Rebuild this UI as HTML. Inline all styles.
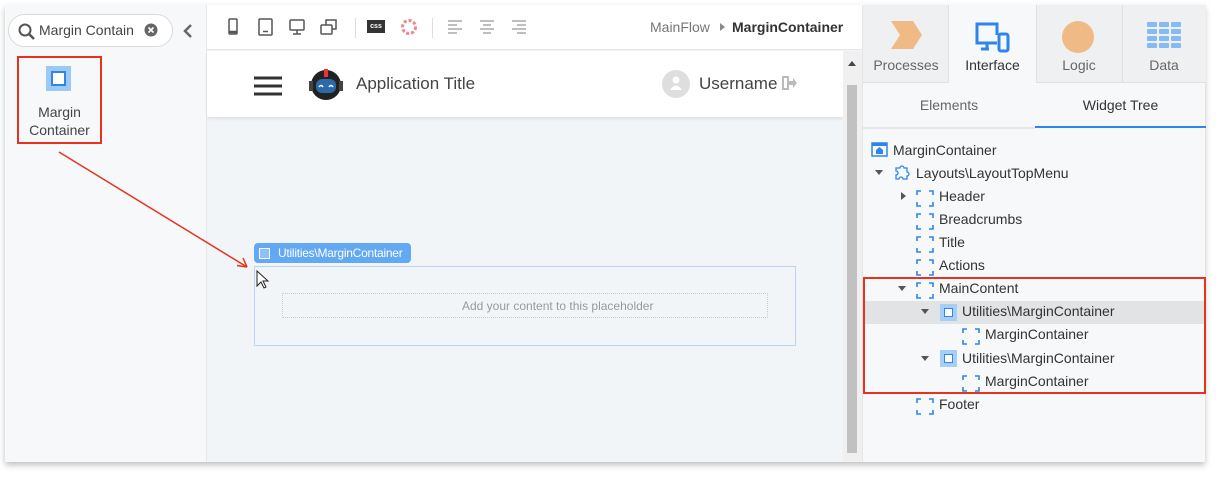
<!DOCTYPE html>
<html><head><meta charset="utf-8"><style>
*{box-sizing:border-box;margin:0;padding:0}
body{width:1220px;height:477px;background:#fff;font-family:"Liberation Sans",sans-serif;position:relative;overflow:hidden;color:#333}
.abs{position:absolute}
#frame{left:5px;top:5px;width:1200px;height:457px;box-shadow:0 3px 6px rgba(0,0,0,.25);background:#f3f5f8}
#left{left:0;top:0;width:202px;height:457px;background:#f7f8fa;border-right:1px solid #e6e8ea}
#tool{left:202px;top:0;width:655px;height:45px;background:#fff;border-bottom:1px solid #e3e5e8}
#canvas{left:202px;top:46px;width:636px;height:411px;background:#f2f5f8}
#scroll{left:838px;top:46px;width:19px;height:411px;background:#f0f0f0}
#right{left:857px;top:0;width:343px;height:457px;background:#f7f8fa;border-left:1px solid #e3e5e8}
.tr{position:absolute;font-size:14px;color:#333;white-space:nowrap}
</style></head><body>
<div id="frame" class="abs">
 <div id="left" class="abs">
  <div class="abs" style="left:3px;top:9px;width:165px;height:33px;border:1px solid #d8dadd;border-radius:17px;background:#fff"></div>
  <svg class="abs" style="left:13px;top:18px" width="18" height="18"><circle cx="7" cy="7" r="5.5" fill="none" stroke="#555" stroke-width="2"/><path d="M11 11l5 5" stroke="#555" stroke-width="2.5"/></svg>
  <div class="abs" style="left:34px;top:17px;font-size:14px;color:#444">Margin Contain</div>
  <svg class="abs" style="left:139px;top:18px" width="14" height="14"><circle cx="7" cy="7" r="6.5" fill="#666"/><path d="M4.5 4.5l5 5M9.5 4.5l-5 5" stroke="#fff" stroke-width="1.6"/></svg>
  <svg class="abs" style="left:178px;top:19px" width="10" height="14"><path d="M8 1L2 7l6 6" fill="none" stroke="#666" stroke-width="2.5"/></svg>
  <div class="abs" style="left:12px;top:51px;width:85px;height:88px;border:2px solid #e8321e"></div>
  <div class="abs" style="left:41px;top:61px;width:25px;height:25px;background:#9ccaf7"></div>
  <div class="abs" style="left:46px;top:66px;width:15px;height:15px;border:2px solid #2f86ea;background:#fff"></div>
  <div class="abs" style="left:12px;top:98px;width:85px;text-align:center;font-size:14px;line-height:18px;color:#444">Margin<br>Container</div>
 </div>
 <div id="tool" class="abs">
  <svg class="abs" style="left:20px;top:12px" width="120" height="20" fill="none" stroke="#555" stroke-width="1.5">
   <rect x="2" y="2" width="8" height="15" rx="1"/><path d="M2.5 15h7" stroke-width="2.5"/>
   <rect x="32" y="2" width="13" height="16" rx="1"/><path d="M36 14.5h5"/>
   <rect x="63" y="3" width="14" height="10" rx="1"/><path d="M70 13v4M66 17h8"/>
   <rect x="94" y="8" width="11" height="9" rx="1"/><path d="M99 8V3h10v9h-4"/>
  </svg>
  <div class="abs" style="left:148px;top:13px;width:1px;height:20px;background:#ddd"></div>
  <div class="abs" style="left:160px;top:15px;width:18px;height:13px;background:#333;color:#fff;font-size:7px;font-weight:bold;text-align:center;line-height:13px">css</div>
  <svg class="abs" style="left:193px;top:13px" width="18" height="18"><circle cx="9" cy="9" r="6.5" fill="none" stroke="#e88" stroke-width="3" stroke-dasharray="3 2"/></svg>
  <div class="abs" style="left:225px;top:13px;width:1px;height:20px;background:#ddd"></div>
  <svg class="abs" style="left:240px;top:14px" width="90" height="16" stroke="#999" stroke-width="1.2">
   <path d="M1 2h14M1 6h9M1 10h14M1 14h9"/><path d="M33 2h14M36 6h8M33 10h14M36 14h8"/><path d="M65 2h14M70 6h9M65 10h14M70 14h9"/>
  </svg>
  <div class="abs" style="left:443px;top:14px;font-size:14px;color:#777">MainFlow</div>
  <div class="abs" style="left:513px;top:18px;width:0;height:0;border-left:5px solid #888;border-top:4px solid transparent;border-bottom:4px solid transparent"></div>
  <div class="abs" style="left:525px;top:14px;font-size:14px;font-weight:bold;color:#333">MarginContainer</div>
 </div>
 <div id="canvas" class="abs">
  <div class="abs" style="left:0;top:0;width:636px;height:66px;background:#fff;box-shadow:0 2px 3px rgba(0,0,0,.08)"></div>
  <svg class="abs" style="left:46px;top:25px" width="30" height="20"><path d="M1 2h28M1 10h28M1 18h28" stroke="#333" stroke-width="3"/></svg>
  <svg class="abs" style="left:100px;top:14px" width="38" height="38"><circle cx="19" cy="20" r="15" fill="#222"/><rect x="17" y="4" width="4" height="8" fill="#e33"/><rect x="9" y="14" width="20" height="14" rx="6" fill="#2a6aa8"/><path d="M12 22q2-3 4 0M22 22q2-3 4 0" stroke="#fff" stroke-width="1.5" fill="none"/><rect x="2" y="16" width="4" height="10" fill="#444"/><rect x="32" y="16" width="4" height="10" fill="#444"/></svg>
  <div class="abs" style="left:149px;top:23px;font-size:17px;color:#444">Application Title</div>
  <div class="abs" style="left:455px;top:19px;width:28px;height:28px;border-radius:50%;background:#dedede"></div>
  <svg class="abs" style="left:462px;top:24px" width="14" height="16"><circle cx="7" cy="5" r="3.5" fill="#fff"/><path d="M1 15q6-9 12 0z" fill="#fff"/></svg>
  <div class="abs" style="left:492px;top:23px;font-size:17px;color:#444">Username</div>
  <svg class="abs" style="left:575px;top:25px" width="16" height="14"><path d="M1 1h5v12H1z" fill="none" stroke="#bbb" stroke-width="2"/><path d="M7 5h4V2l4 5-4 5V9H7z" fill="#bbb"/></svg>
  <div class="abs" style="left:47px;top:192px;width:157px;height:20px;background:#62a8f3;border-radius:4px;color:#fff;font-size:12px;line-height:20px;padding-left:24px;letter-spacing:-.25px">Utilities\MarginContainer</div>
  <div class="abs" style="left:52px;top:197px;width:11px;height:11px;border:1.5px solid #fff;background:#8cc0f7"></div>
  <div class="abs" style="left:47px;top:215px;width:542px;height:80px;border:1px solid #b9d5f3"></div>
  <div class="abs" style="left:75px;top:242px;width:486px;height:25px;border:1px dotted #ccc;padding-left:179px;font-size:12px;line-height:24px;color:#999">Add your content to this placeholder</div>
  <svg class="abs" style="left:49px;top:219px" width="14" height="20"><path d="M1 1v15l4-4 3 6 2-1-3-6h5z" fill="#fff" stroke="#222"/></svg>
 </div>
 <div id="scroll" class="abs">
  <div class="abs" style="left:5px;top:10px;width:0;height:0;border-bottom:5px solid #444;border-left:4px solid transparent;border-right:4px solid transparent"></div>
  <div class="abs" style="left:4px;top:34px;width:10px;height:368px;background:#c1c1c1"></div>
 </div>
 <div id="right" class="abs">
  <div class="abs" style="left:0;top:0;width:86px;height:78px;background:#eff0f2;border-right:1px solid #e0e0e0;border-bottom:1px solid #e0e0e0"></div>
  <div class="abs" style="left:173px;top:0;width:86px;height:78px;background:#eff0f2;border-left:1px solid #e0e0e0;border-bottom:1px solid #e0e0e0"></div>
  <div class="abs" style="left:259px;top:0;width:84px;height:78px;background:#eff0f2;border-left:1px solid #e0e0e0;border-bottom:1px solid #e0e0e0"></div>
  <svg class="abs" style="left:27px;top:15px" width="34" height="30"><path d="M1 1h22l9 14-9 14H1l9-14z" fill="#efba86"/></svg>
  <svg class="abs" style="left:111px;top:16px" width="36" height="32" fill="none" stroke="#2e86ea" stroke-width="3"><path d="M23 14V3H3v19h20"/><path d="M13 22v5M7 28h8"/><rect x="25" y="13" width="9" height="17" rx="2"/></svg>
  <div class="abs" style="left:199px;top:16px;width:32px;height:32px;border-radius:50%;background:#efba86"></div>
  <svg class="abs" style="left:284px;top:17px" width="35" height="27" fill="#86baf3"><rect x="0" y="0" width="10" height="5" rx="1"/><rect x="12" y="0" width="10" height="5" rx="1"/><rect x="24" y="0" width="10" height="5" rx="1"/><rect x="0" y="7" width="10" height="5" rx="1"/><rect x="12" y="7" width="10" height="5" rx="1"/><rect x="24" y="7" width="10" height="5" rx="1"/><rect x="0" y="14" width="10" height="5" rx="1"/><rect x="12" y="14" width="10" height="5" rx="1"/><rect x="24" y="14" width="10" height="5" rx="1"/><rect x="0" y="21" width="10" height="5" rx="1"/><rect x="12" y="21" width="10" height="5" rx="1"/><rect x="24" y="21" width="10" height="5" rx="1"/></svg>
  <div class="abs" style="left:0;top:52px;width:86px;text-align:center;font-size:14px;color:#666">Processes</div>
  <div class="abs" style="left:86px;top:52px;width:87px;text-align:center;font-size:14px;color:#333">Interface</div>
  <div class="abs" style="left:173px;top:52px;width:86px;text-align:center;font-size:14px;color:#666">Logic</div>
  <div class="abs" style="left:259px;top:52px;width:84px;text-align:center;font-size:14px;color:#666">Data</div>
  <div class="abs" style="left:0;top:92px;width:172px;text-align:center;font-size:14px;color:#666">Elements</div>
  <div class="abs" style="left:172px;top:92px;width:171px;text-align:center;font-size:14px;color:#333">Widget Tree</div>
  <div class="abs" style="left:0;top:122px;width:172px;height:2px;background:#e3e5e8"></div>
  <div class="abs" style="left:172px;top:121px;width:171px;height:2px;background:#2e86ea"></div>
  <svg class="abs" style="left:8px;top:137px" width="17" height="15"><rect x="1" y="1" width="15" height="13" fill="none" stroke="#2e86ea" stroke-width="1.5"/><rect x="1" y="1" width="15" height="3" fill="#2e86ea"/><path d="M5 12V8l3.5-3L12 8v4z" fill="#2e86ea"/></svg>
  <div class="tr" style="left:30px;top:137px">MarginContainer</div>
  <div class="abs" style="left:12px;top:165px;border-top:5px solid #555;border-left:4px solid transparent;border-right:4px solid transparent"></div>
  <svg class="abs" style="left:30px;top:160px" width="17" height="16"><path d="M3 3h4a2 2 0 014 0h3v4a2 2 0 010 4v3h-4a2 2 0 00-4 0H3v-4a2 2 0 000-4z" fill="none" stroke="#2e86ea" stroke-width="1.3"/></svg>
  <div class="tr" style="left:53px;top:160px">Layouts\LayoutTopMenu</div>
  <div class="abs" style="left:38px;top:187px;border-left:5px solid #555;border-top:4px solid transparent;border-bottom:4px solid transparent"></div>
  <div class="abs" style="left:0;top:296px;width:343px;height:23px;background:#e2e3e5"></div>
  <div class="abs" style="left:0;top:272px;width:343px;height:117px;border:2px solid #e8321e"></div>
  <div class="abs" style="left:35px;top:281px;border-top:5px solid #555;border-left:4px solid transparent;border-right:4px solid transparent"></div>
  <div class="abs" style="left:58px;top:304px;border-top:5px solid #555;border-left:4px solid transparent;border-right:4px solid transparent"></div>
  <div class="abs" style="left:58px;top:351px;border-top:5px solid #555;border-left:4px solid transparent;border-right:4px solid transparent"></div>
  <div class="abs" style="left:77px;top:299px;width:17px;height:17px;background:#a6cff8"></div><div class="abs" style="left:81px;top:303px;width:9px;height:9px;border:1.5px solid #2e86ea;background:#fff"></div>
  <div class="abs" style="left:77px;top:345px;width:17px;height:17px;background:#a6cff8"></div><div class="abs" style="left:81px;top:349px;width:9px;height:9px;border:1.5px solid #2e86ea;background:#fff"></div>
  <div class="tr" style="left:76px;top:183px">Header</div>
  <div class="tr" style="left:76px;top:206px">Breadcrumbs</div>
  <div class="tr" style="left:76px;top:229px">Title</div>
  <div class="tr" style="left:76px;top:252px">Actions</div>
  <div class="tr" style="left:76px;top:275px">MainContent</div>
  <div class="tr" style="left:99px;top:298px">Utilities\MarginContainer</div>
  <div class="tr" style="left:122px;top:321px">MarginContainer</div>
  <div class="tr" style="left:99px;top:345px">Utilities\MarginContainer</div>
  <div class="tr" style="left:122px;top:368px">MarginContainer</div>
  <div class="tr" style="left:76px;top:391px">Footer</div>
  <svg class="abs" style="left:0;top:0" width="343" height="457" fill="none" stroke="#2e86ea" stroke-width="1.6">
   <g id="b"><path d="M54 190v-4h4M66 186h4v4M54 197v4h4M66 201h4v-4"/></g>
   <use href="#b" y="23"/><use href="#b" y="46"/><use href="#b" y="69"/><use href="#b" y="92"/>
   <use href="#b" x="46" y="138"/><use href="#b" x="46" y="185"/><use href="#b" y="208"/>
  </svg>
 </div>
</div>
<svg class="abs" style="left:0;top:0" width="1220" height="477"><path d="M59 152L247 267" stroke="#e8321e" stroke-width="1.5"/><path d="M247 267l-10-1.5M247 267l-4-9" stroke="#e8321e" stroke-width="1.5" fill="none"/></svg>
</body></html>
